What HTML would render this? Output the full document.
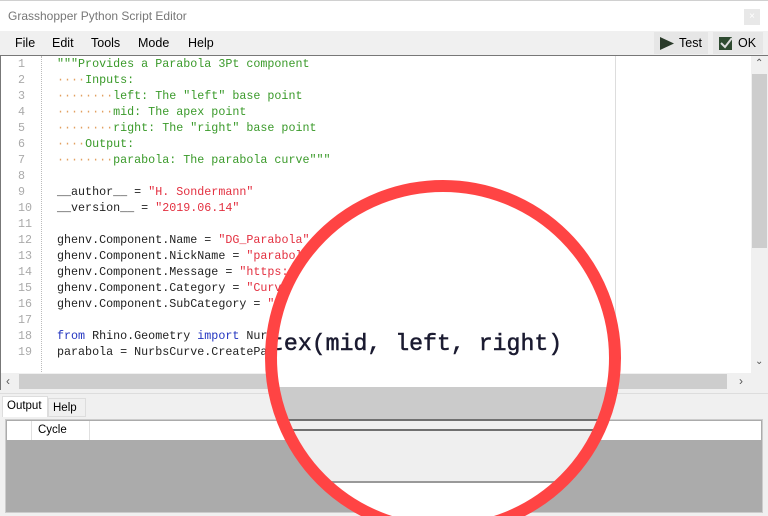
<!DOCTYPE html>
<html><head><meta charset="utf-8"><style>
*{margin:0;padding:0;box-sizing:border-box}
body{width:768px;height:516px;overflow:hidden;background:#f0f0f0;font-family:"Liberation Sans",sans-serif;position:relative}
.abs{position:absolute}
#title{left:0;top:0;width:768px;height:31px;background:#fff;border-top:1px solid #d0d0d0}
#title span{position:absolute;left:8px;top:8px;font-size:12px;color:#777}
#menu{left:0;top:31px;width:768px;height:24px;background:#f0f0f0}
#menu span{position:absolute;top:5px;font-size:12.5px;color:#000}
#editor{left:0;top:55px;width:768px;height:335px;background:#fff;border:1px solid #777}
.code{font-family:"Liberation Mono",monospace;font-size:11.7px;line-height:16px;white-space:pre}
.ln{position:absolute;left:17px;color:#aaa}
.cd{position:absolute;left:56px}
.g{color:#3a9a2a}.r{color:#e33040}.b{color:#2234c0}.d{color:#e2a060}.k{color:#222}
</style></head><body>
<div id="title" class="abs"><span>Grasshopper Python Script Editor</span>
<div class="abs" style="left:744px;top:8px;width:16px;height:16px;background:#e8e8e8;color:#fff;font-size:10px;text-align:center;line-height:16px">×</div></div>
<div id="menu" class="abs">
<span style="left:15px">File</span><span style="left:52px">Edit</span><span style="left:91px">Tools</span><span style="left:138px">Mode</span><span style="left:188px">Help</span>
<div class="abs" style="left:654px;top:1px;width:54px;height:22px;background:#e6e6e6"></div>
<svg class="abs" style="left:660px;top:6px" width="14" height="13"><polygon points="0,0 14,6.5 0,13" fill="#2a3a2a"/></svg>
<span style="left:679px">Test</span>
<div class="abs" style="left:713px;top:1px;width:50px;height:22px;background:#e6e6e6"></div>
<div class="abs" style="left:719px;top:6px;width:13px;height:13px;background:#2e4a30"></div>
<svg class="abs" style="left:719px;top:5px" width="14" height="14"><path d="M2 7 L6 11 L13 2" stroke="#ddd" stroke-width="2" fill="none"/></svg>
<span style="left:738px">OK</span>
</div>
<div id="editor" class="abs">
<div class="abs" style="left:40px;top:0;width:0;height:318px;border-left:1px dotted #bbb"></div>
<div class="abs" style="left:614px;top:0;width:1px;height:318px;background:#ddd"></div>
<div class="code">
<div class="ln" style="top:0">1
2
3
4
5
6
7
8
9
10
11
12
13
14
15
16
17
18
19</div>
<div class="cd" style="top:0"><span class="g">"""Provides a Parabola 3Pt component</span>
<span class="d">····</span><span class="g">Inputs:</span>
<span class="d">········</span><span class="g">left: The "left" base point</span>
<span class="d">········</span><span class="g">mid: The apex point</span>
<span class="d">········</span><span class="g">right: The "right" base point</span>
<span class="d">····</span><span class="g">Output:</span>
<span class="d">········</span><span class="g">parabola: The parabola curve"""</span>

<span class="k">__author__ = </span><span class="r">"H. Sondermann"</span>
<span class="k">__version__ = </span><span class="r">"2019.06.14"</span>

<span class="k">ghenv.Component.Name = </span><span class="r">"DG_Parabola"</span>
<span class="k">ghenv.Component.NickName = </span><span class="r">"parabola"</span>
<span class="k">ghenv.Component.Message = </span><span class="r">"https://"</span>
<span class="k">ghenv.Component.Category = </span><span class="r">"Curve"</span>
<span class="k">ghenv.Component.SubCategory = </span><span class="r">"Util"</span>

<span class="b">from</span><span class="k"> Rhino.Geometry </span><span class="b">import</span><span class="k"> NurbsCurve</span>
<span class="k">parabola = NurbsCurve.CreateParabolaFromVertex(mid, left, right)</span></div>
</div>
<div class="abs" style="left:750px;top:0;width:17px;height:317px;background:#f0f0f0"></div>
<div class="abs" style="left:751px;top:18px;width:15px;height:174px;background:#cdcdcd"></div>
<div class="abs" style="left:754px;top:2px;font-size:10px;color:#555">⌃</div>
<div class="abs" style="left:754px;top:300px;font-size:10px;color:#555">⌄</div>
<div class="abs" style="left:0;top:317px;width:767px;height:17px;background:#f0f0f0"></div>
<div class="abs" style="left:18px;top:318px;width:708px;height:15px;background:#cdcdcd"></div>
<div class="abs" style="left:5px;top:318px;font-size:12px;color:#555">‹</div>
<div class="abs" style="left:738px;top:318px;font-size:12px;color:#555">›</div>
</div>
<div class="abs" style="left:0;top:393px;width:768px;height:123px;background:#f0f0f0;border-top:1px solid #ddd"></div>
<div class="abs" style="left:2px;top:396px;width:46px;height:21px;background:#fff;border:1px solid #ddd;border-bottom:none;font-size:11.5px;padding:3px 0 0 4px">Output</div>
<div class="abs" style="left:48px;top:398px;width:38px;height:19px;background:#f0f0f0;border:1px solid #ddd;font-size:11.5px;padding:3px 0 0 4px">Help</div>
<div class="abs" style="left:5px;top:419px;width:758px;height:94px;border:1px solid #ccc;background:#ababab"></div>
<div class="abs" style="left:7px;top:421px;width:754px;height:19px;background:#fff"></div>
<div class="abs" style="left:31px;top:421px;width:1px;height:19px;background:#e0e0e0"></div>
<div class="abs" style="left:89px;top:421px;width:1px;height:19px;background:#e0e0e0"></div>
<div class="abs" style="left:38px;top:424px;font-size:11.5px">Cycle</div>
<svg class="abs" style="left:0;top:0" width="768" height="516">
<defs><clipPath id="c"><circle cx="443" cy="358" r="172"/></clipPath></defs>
<g clip-path="url(#c)">
<rect x="260" y="170" width="380" height="360" fill="#fff"/>
<rect x="260" y="387" width="380" height="32" fill="#cbcbcb"/>
<rect x="260" y="419" width="380" height="2" fill="#707070"/>
<rect x="260" y="421" width="380" height="8" fill="#f0f0f0"/>
<rect x="260" y="429" width="380" height="2" fill="#707070"/>
<rect x="260" y="431" width="380" height="50" fill="#efefef"/>
<rect x="260" y="481" width="380" height="2" fill="#999"/>
<rect x="260" y="483" width="380" height="40" fill="#fff"/>
<text x="270" y="350" font-family="Liberation Mono, monospace" font-size="23.2" fill="#1a1a30" stroke="#1a1a30" stroke-width="0.5">tex(mid, left, right)</text>
</g>
<circle cx="443" cy="358" r="172" fill="none" stroke="#ff4444" stroke-width="12"/>
</svg>
</body></html>
